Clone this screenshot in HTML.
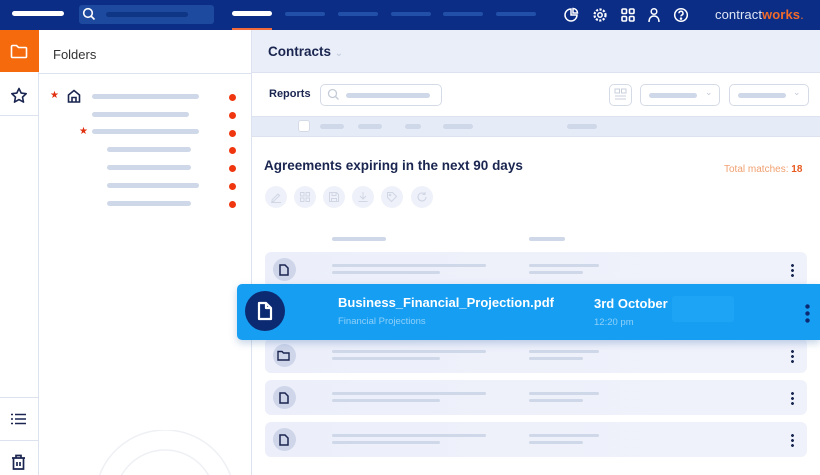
<!DOCTYPE html>
<html style="width:820px;height:475px;overflow:hidden"><head><style>
*{margin:0;padding:0;box-sizing:border-box}
html,body{width:820px;height:475px;overflow:hidden}
body{background:#fff;font-family:"Liberation Sans",sans-serif}
#w{position:relative;width:820px;height:475px;overflow:hidden}
.a{position:absolute}
.bar{position:absolute;height:5px;border-radius:3px;background:#cfd8e8}
.dot{position:absolute;width:7px;height:7px;border-radius:50%;background:#f0360f}
.row{position:absolute;left:265px;width:542px;height:35px;border-radius:6px;background:linear-gradient(90deg,#eceffa,#f0f2fb)}
.ric{position:absolute;left:8px;top:6px;width:23px;height:23px;border-radius:50%;background:#cfd6ea}
.kb{position:absolute;right:13px;top:11px;width:3px;height:14px;background:radial-gradient(circle,#1a2a55 1.3px,transparent 1.6px) 0 0/3px 5px}
.ab{position:absolute;top:186px;width:22px;height:22px;border-radius:50%;background:#eef1f9}
.ab svg{position:absolute;left:5px;top:5px}
</style></head><body><div id="w">
<!-- top nav -->
<div class="a" style="left:0;top:0;width:820px;height:30px;background:#0b2d86"></div>
<div class="a" style="left:12px;top:11px;width:52px;height:5px;border-radius:3px;background:#fff"></div>
<div class="a" style="left:79px;top:5px;width:135px;height:19px;border-radius:3px;background:#1d4a9e"></div>
<svg class="a" style="left:82px;top:7px" width="14" height="14" viewBox="0 0 14 14"><circle cx="6" cy="6" r="4.3" fill="none" stroke="#fff" stroke-width="1.6"/><path d="M9 9l3.5 3.5" stroke="#fff" stroke-width="1.6"/></svg>
<div class="a" style="left:106px;top:12px;width:82px;height:5px;border-radius:3px;background:#0f3585"></div>
<div class="a" style="left:232px;top:11px;width:40px;height:5px;border-radius:3px;background:#fff"></div>
<div class="a" style="left:232px;top:28px;width:40px;height:2px;background:#f06a3a"></div>
<div class="a" style="left:285px;top:12px;width:40px;height:4px;border-radius:3px;background:#2250a8"></div>
<div class="a" style="left:338px;top:12px;width:40px;height:4px;border-radius:3px;background:#2250a8"></div>
<div class="a" style="left:391px;top:12px;width:40px;height:4px;border-radius:3px;background:#2250a8"></div>
<div class="a" style="left:443px;top:12px;width:40px;height:4px;border-radius:3px;background:#2250a8"></div>
<div class="a" style="left:496px;top:12px;width:40px;height:4px;border-radius:3px;background:#2250a8"></div>
<svg class="a" style="left:563px;top:7px" width="16" height="16" viewBox="0 0 16 16" fill="none" stroke="#fff" stroke-width="1.5"><path d="M8 2a6 6 0 1 0 6 6H8z"/><path d="M10 1.5v4.5h4.5A4.5 4.5 0 0 0 10 1.5z"/></svg>
<svg class="a" style="left:592px;top:7px" width="16" height="16" viewBox="0 0 16 16" fill="none" stroke="#fff" stroke-width="1.5"><circle cx="8" cy="8" r="2.2"/><circle cx="8" cy="8" r="5.5" stroke-dasharray="2.2 1.4" stroke-width="2.2"/></svg>
<svg class="a" style="left:621px;top:8px" width="14" height="14" viewBox="0 0 14 14" fill="none" stroke="#fff" stroke-width="1.6"><rect x="1" y="1" width="4.5" height="4.5" rx="1"/><rect x="8.5" y="1" width="4.5" height="4.5" rx="1"/><rect x="1" y="8.5" width="4.5" height="4.5" rx="1"/><rect x="8.5" y="8.5" width="4.5" height="4.5" rx="1"/></svg>
<svg class="a" style="left:647px;top:7px" width="14" height="16" viewBox="0 0 14 16" fill="none" stroke="#fff" stroke-width="1.5"><circle cx="7" cy="4.5" r="2.8"/><path d="M2 15c0-4 2.2-6 5-6s5 2 5 6"/></svg>
<svg class="a" style="left:673px;top:7px" width="16" height="16" viewBox="0 0 16 16" fill="none" stroke="#fff" stroke-width="1.5"><circle cx="8" cy="8" r="6.3"/><path d="M6 6.3a2 2 0 1 1 2.6 1.9c-.5.2-.6.6-.6 1.2"/><circle cx="8" cy="11.6" r=".5" fill="#fff"/></svg>
<div class="a" style="left:715px;top:7px;font-size:13px;color:#dfe6f5;letter-spacing:.1px">contract<b style="color:#f06a2a">works</b><span style="color:#f06a2a">.</span></div>

<!-- left rail -->
<div class="a" style="left:0;top:30px;width:39px;height:445px;border-right:1px solid #dde3ee"></div>
<div class="a" style="left:0;top:30px;width:39px;height:42px;background:#f66a0e"></div>
<svg class="a" style="left:10px;top:44px" width="18" height="15" viewBox="0 0 18 15" fill="none" stroke="#fff" stroke-width="1.6"><path d="M1.5 2.5a1 1 0 0 1 1-1h4l2 2h7a1 1 0 0 1 1 1v8a1 1 0 0 1-1 1h-13a1 1 0 0 1-1-1z"/></svg>
<svg class="a" style="left:10px;top:87px" width="18" height="17" viewBox="0 0 18 17" fill="none" stroke="#1a2550" stroke-width="1.6" stroke-linejoin="round"><path d="M9 1.5l2.2 4.6 5 .6-3.7 3.4 1 5L9 12.6 4.5 15.1l1-5L1.8 6.7l5-.6z"/></svg>
<div class="a" style="left:0;top:115px;width:39px;height:1px;background:#dde3ee"></div>
<div class="a" style="left:0;top:397px;width:39px;height:1px;background:#dde3ee"></div>
<div class="a" style="left:0;top:440px;width:39px;height:1px;background:#dde3ee"></div>
<svg class="a" style="left:11px;top:413px" width="15" height="12" viewBox="0 0 15 12" stroke="#1a2550" stroke-width="1.6"><path d="M4 1.5h11M4 6h11M4 10.5h11M0 1.5h2M0 6h2M0 10.5h2"/></svg>
<svg class="a" style="left:11px;top:454px" width="15" height="17" viewBox="0 0 15 17" fill="none" stroke="#1a2550" stroke-width="1.7"><path d="M1 4h13M5 4V1.5h5V4M2.5 4v11h10V4M6 8v4M9 8v4"/></svg>

<!-- folders panel -->
<div class="a" style="left:39px;top:430px;width:212px;height:45px;background:radial-gradient(circle at 126px 70px,transparent 49px,#eef0f4 49.5px,#eef0f4 50.5px,transparent 51px,transparent 69px,#eef0f4 69.5px,#eef0f4 70.5px,transparent 71px)"></div>
<div class="a" style="left:53px;top:47px;font-size:13px;color:#333">Folders</div>
<div class="a" style="left:39px;top:73px;width:212px;height:1px;background:#dde3ee"></div>
<div class="a" style="left:251px;top:30px;width:1px;height:445px;background:#dde3ee"></div>
<div class="a" style="left:50px;top:90px;color:#e0300f;font-size:10px">★</div>
<svg class="a" style="left:67px;top:89px" width="14" height="14" viewBox="0 0 14 14" fill="none" stroke="#1a2550" stroke-width="1.6"><path d="M1.5 13V6L7 1.5 12.5 6v7zM5 13V8.5h4V13"/></svg>
<div class="a" style="left:79px;top:126px;color:#e0300f;font-size:10px">★</div>
<div class="bar" style="left:92px;top:94px;width:107px"></div>
<div class="bar" style="left:92px;top:112px;width:97px"></div>
<div class="bar" style="left:92px;top:129px;width:107px"></div>
<div class="bar" style="left:107px;top:147px;width:84px"></div>
<div class="bar" style="left:107px;top:165px;width:84px"></div>
<div class="bar" style="left:107px;top:183px;width:92px"></div>
<div class="bar" style="left:107px;top:201px;width:84px"></div>
<div class="dot" style="left:229px;top:94px"></div>
<div class="dot" style="left:229px;top:112px"></div>
<div class="dot" style="left:229px;top:130px"></div>
<div class="dot" style="left:229px;top:147px"></div>
<div class="dot" style="left:229px;top:165px"></div>
<div class="dot" style="left:229px;top:183px"></div>
<div class="dot" style="left:229px;top:201px"></div>

<!-- main header -->
<div class="a" style="left:252px;top:30px;width:568px;height:43px;background:#e9eef8;border-bottom:1px solid #dde3ee"></div>
<div class="a" style="left:268px;top:44px;font-size:13.5px;font-weight:bold;color:#1a2550">Contracts <span style="color:#c0c8d8;font-weight:normal;font-size:10px">⌄</span></div>
<div class="a" style="left:269px;top:88px;font-size:11px;font-weight:bold;color:#1a2550">Reports</div>
<div class="a" style="left:320px;top:84px;width:122px;height:22px;border:1px solid #d5dbe6;border-radius:5px"></div>
<svg class="a" style="left:327px;top:88px" width="13" height="13" viewBox="0 0 13 13" fill="none" stroke="#c5ccd8" stroke-width="1.3"><circle cx="5.5" cy="5.5" r="4"/><path d="M8.5 8.5l3 3"/></svg>
<div class="bar" style="left:346px;top:93px;width:84px"></div>
<div class="a" style="left:609px;top:84px;width:23px;height:22px;border:1px solid #d5dbe6;border-radius:5px"></div>
<svg class="a" style="left:613px;top:88px" width="15" height="14" viewBox="0 0 15 14" fill="none" stroke="#c8cfdb" stroke-width="1"><rect x="2" y="1" width="4.5" height="4"/><rect x="8.5" y="1" width="4.5" height="4"/><path d="M2 8h11M2 11h11"/></svg>
<div class="a" style="left:640px;top:84px;width:80px;height:22px;border:1px solid #d5dbe6;border-radius:5px"></div>
<div class="bar" style="left:649px;top:93px;width:48px"></div>
<div class="a" style="left:705px;top:87px;font-size:9px;color:#c0c8d8">⌄</div>
<div class="a" style="left:729px;top:84px;width:80px;height:22px;border:1px solid #d5dbe6;border-radius:5px"></div>
<div class="bar" style="left:738px;top:93px;width:48px"></div>
<div class="a" style="left:793px;top:87px;font-size:9px;color:#c0c8d8">⌄</div>
<div class="a" style="left:252px;top:116px;width:568px;height:21px;background:#e6ecf7;border-top:1px solid #dde3ee;border-bottom:1px solid #dde3ee"></div>
<div class="a" style="left:298px;top:120px;width:12px;height:12px;border-radius:3px;background:#fff;border:1px solid #d5dbe6"></div>
<div class="bar" style="left:320px;top:124px;width:24px"></div>
<div class="bar" style="left:358px;top:124px;width:24px"></div>
<div class="bar" style="left:405px;top:124px;width:16px"></div>
<div class="bar" style="left:443px;top:124px;width:30px"></div>
<div class="bar" style="left:567px;top:124px;width:30px"></div>

<!-- content -->
<div class="a" style="left:264px;top:158px;font-size:13.5px;font-weight:bold;color:#1a2550">Agreements expiring in the next 90 days</div>
<div class="a" style="left:724px;top:164px;font-size:10px;color:#f0a070">Total matches: <b style="color:#e85a20">18</b></div>
<div class="ab" style="left:265px"><svg width="12" height="12" viewBox="0 0 12 12" fill="none" stroke="#d0d6e4" stroke-width="1"><path d="M2 9l6-6 1.5 1.5-6 6H2zM1 11.5h10"/></svg></div>
<div class="ab" style="left:294px"><svg width="12" height="12" viewBox="0 0 12 12" fill="none" stroke="#d0d6e4" stroke-width="1"><rect x="1.5" y="1.5" width="3.5" height="3.5"/><rect x="7" y="1.5" width="3.5" height="3.5"/><rect x="1.5" y="7" width="3.5" height="3.5"/><rect x="7" y="7" width="3.5" height="3.5"/></svg></div>
<div class="ab" style="left:323px"><svg width="12" height="12" viewBox="0 0 12 12" fill="none" stroke="#d0d6e4" stroke-width="1"><path d="M1.5 1.5h7l2 2v7h-9zM4 1.5v3h4v-3M3.5 10.5v-3h5v3"/></svg></div>
<div class="ab" style="left:352px"><svg width="12" height="12" viewBox="0 0 12 12" fill="none" stroke="#d0d6e4" stroke-width="1"><path d="M6 1v7M3 5l3 3 3-3M1.5 10.5h9"/></svg></div>
<div class="ab" style="left:381px"><svg width="12" height="12" viewBox="0 0 12 12" fill="none" stroke="#d0d6e4" stroke-width="1"><path d="M1.5 1.5h5l4 4-5 5-4-4z"/><circle cx="4" cy="4" r=".8"/></svg></div>
<div class="ab" style="left:411px"><svg width="12" height="12" viewBox="0 0 12 12" fill="none" stroke="#d0d6e4" stroke-width="1.1"><path d="M10 6a4 4 0 1 1-1.2-2.9M9 1v2.5H6.5"/></svg></div>
<div class="bar" style="left:332px;top:237px;width:54px;height:4px"></div>
<div class="bar" style="left:529px;top:237px;width:36px;height:4px"></div>

<div class="row" style="top:252px"><div class="ric"></div><div class="bar" style="left:67px;top:12px;width:154px;height:3px"></div><div class="bar" style="left:67px;top:19px;width:108px;height:3px"></div><div class="bar" style="left:264px;top:12px;width:70px;height:3px"></div><div class="bar" style="left:264px;top:19px;width:54px;height:3px"></div><div class="kb"></div></div>
<div class="row" style="top:338px"><div class="ric"></div><div class="bar" style="left:67px;top:12px;width:154px;height:3px"></div><div class="bar" style="left:67px;top:19px;width:108px;height:3px"></div><div class="bar" style="left:264px;top:12px;width:70px;height:3px"></div><div class="bar" style="left:264px;top:19px;width:54px;height:3px"></div><div class="kb"></div></div>
<div class="row" style="top:380px"><div class="ric"></div><div class="bar" style="left:67px;top:12px;width:154px;height:3px"></div><div class="bar" style="left:67px;top:19px;width:108px;height:3px"></div><div class="bar" style="left:264px;top:12px;width:70px;height:3px"></div><div class="bar" style="left:264px;top:19px;width:54px;height:3px"></div><div class="kb"></div></div>
<div class="row" style="top:422px"><div class="ric"></div><div class="bar" style="left:67px;top:12px;width:154px;height:3px"></div><div class="bar" style="left:67px;top:19px;width:108px;height:3px"></div><div class="bar" style="left:264px;top:12px;width:70px;height:3px"></div><div class="bar" style="left:264px;top:19px;width:54px;height:3px"></div><div class="kb"></div></div>
<svg class="a" style="left:279px;top:264px" width="10" height="12" viewBox="0 0 10 12" fill="none" stroke="#1a2550" stroke-width="1.5"><path d="M1 1h5l3 3v7H1z"/></svg>
<svg class="a" style="left:277px;top:350px" width="13" height="11" viewBox="0 0 13 11" fill="none" stroke="#1a2550" stroke-width="1.4"><path d="M1 1.5h4l1.5 1.5H12v7H1z"/></svg>
<svg class="a" style="left:279px;top:392px" width="10" height="12" viewBox="0 0 10 12" fill="none" stroke="#1a2550" stroke-width="1.5"><path d="M1 1h5l3 3v7H1z"/></svg>
<svg class="a" style="left:279px;top:434px" width="10" height="12" viewBox="0 0 10 12" fill="none" stroke="#1a2550" stroke-width="1.5"><path d="M1 1h5l3 3v7H1z"/></svg>

<!-- highlight -->
<div class="a" style="left:237px;top:284px;width:583px;height:56px;border-radius:5px 0 0 5px;background:#169ef2;box-shadow:0 3px 8px rgba(20,80,160,.25)"></div>
<div class="a" style="left:672px;top:296px;width:62px;height:26px;background:#1ea4f4;border-radius:3px"></div>
<div class="a" style="left:245px;top:291px;width:40px;height:40px;border-radius:50%;background:#0c2a72"></div>
<svg class="a" style="left:257px;top:301px" width="16" height="20" viewBox="0 0 16 20" fill="none" stroke="#fff" stroke-width="2.2" stroke-linejoin="round"><path d="M2 2h7l5 5v11H2z"/><path d="M9 2v5h5"/></svg>
<div class="a" style="left:338px;top:295px;font-size:13px;font-weight:bold;color:#fff">Business_Financial_Projection.pdf</div>
<div class="a" style="left:338px;top:316px;font-size:9.5px;color:#8fd0f8">Financial Projections</div>
<div class="a" style="left:594px;top:296px;font-size:13px;font-weight:bold;color:#fff">3rd October</div>
<div class="a" style="left:594px;top:317px;font-size:9.5px;color:#8fd0f8">12:20 pm</div>
<div class="a" style="left:805px;top:303px;width:5px;height:20px;background:radial-gradient(circle,#0c2a72 2px,transparent 2.4px) 0 0/5px 7px"></div>
</div></body></html>
